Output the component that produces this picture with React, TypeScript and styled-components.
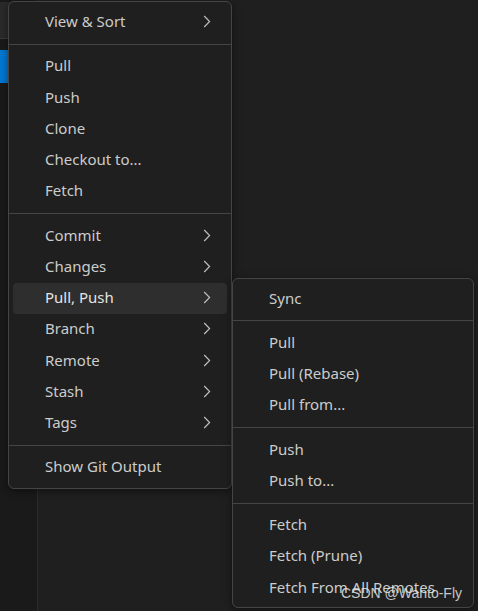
import React from 'react';
import styled, { createGlobalStyle } from 'styled-components';

type Entry = { label: string; sub?: boolean; active?: boolean } | 'sep';

const mainItems: Entry[] = [
  { label: 'View & Sort', sub: true },
  'sep',
  { label: 'Pull' },
  { label: 'Push' },
  { label: 'Clone' },
  { label: 'Checkout to...' },
  { label: 'Fetch' },
  'sep',
  { label: 'Commit', sub: true },
  { label: 'Changes', sub: true },
  { label: 'Pull, Push', sub: true, active: true },
  { label: 'Branch', sub: true },
  { label: 'Remote', sub: true },
  { label: 'Stash', sub: true },
  { label: 'Tags', sub: true },
  'sep',
  { label: 'Show Git Output' },
];

const subItems: Entry[] = [
  { label: 'Sync' },
  'sep',
  { label: 'Pull' },
  { label: 'Pull (Rebase)' },
  { label: 'Pull from...' },
  'sep',
  { label: 'Push' },
  { label: 'Push to...' },
  'sep',
  { label: 'Fetch' },
  { label: 'Fetch (Prune)' },
  { label: 'Fetch From All Remotes' },
];

const Chevron = () => (
  <svg width="8" height="13" viewBox="0 0 8 13" fill="none">
    <path d="M1.2 1 L6.6 6.5 L1.2 12" stroke="currentColor" strokeWidth="1.2" />
  </svg>
);

const MenuList = ({ items }: { items: Entry[] }) => (
  <>
    {items.map((it, i) =>
      it === 'sep' ? (
        <Separator key={i} />
      ) : (
        <Item key={i} $active={it.active}>
          <Label>{it.label}</Label>
          {it.sub && (
            <Arrow>
              <Chevron />
            </Arrow>
          )}
        </Item>
      )
    )}
  </>
);

const App = () => {
  return (
    <>
      <GlobalStyle />
      <Page>
        <Sidebar>
          <InputArea />
          <SelectedRow />
        </Sidebar>
        <Editor />
        <MainMenu>
          <MenuList items={mainItems} />
        </MainMenu>
        <SubMenu>
          <MenuList items={subItems} />
        </SubMenu>
        <Watermark>CSDN @Wanto-Fly</Watermark>
      </Page>
    </>
  );
};

export default App;

const GlobalStyle = createGlobalStyle`
  html, body {
    margin: 0;
    padding: 0;
    background: #1f1f1f;
  }
  body {
    font-family: 'Noto Sans', 'Open Sans', sans-serif;
  }
`;

const Page = styled.div`
  position: relative;
  width: 478px;
  height: 611px;
  overflow: hidden;
  display: flex;
  background: #1f1f1f;
`;

const Sidebar = styled.div`
  width: 37px;
  flex-shrink: 0;
  background: #1a1a1a;
  border-right: 1px solid #2b2b2b;
  display: flex;
  flex-direction: column;
`;

const InputArea = styled.div`
  height: 36px;
  margin-top: 2px;
  background: #2a2a2a;
  border-bottom: 1px solid #3a3a3a;
`;

const SelectedRow = styled.div`
  height: 33px;
  margin-top: 11px;
  background: #0078d4;
`;

const Editor = styled.div`
  flex: 1;
  background: #1f1f1f;
`;

const MenuBase = styled.div`
  position: absolute;
  box-sizing: border-box;
  background: #1f1f1f;
  border: 1px solid #454545;
  border-radius: 6px;
  box-shadow: 0 2px 8px rgba(0, 0, 0, 0.45);
  display: flex;
  flex-direction: column;
`;

const MainMenu = styled(MenuBase)`
  left: 8px;
  top: 1px;
  width: 224px;
  padding: 4.5px 0;
`;

const SubMenu = styled(MenuBase)`
  left: 232px;
  top: 278px;
  width: 242px;
  padding: 4px 0;
`;

const Item = styled.div<{ $active?: boolean }>`
  height: 31.25px;
  margin: 0 4px;
  padding: 0 16px 1px 32px;
  box-sizing: border-box;
  border-radius: 4px;
  display: flex;
  align-items: center;
  justify-content: space-between;
  background: ${(p) => (p.$active ? '#2e2e2e' : 'transparent')};
  color: ${(p) => (p.$active ? '#e4e4e4' : '#cccccc')};
  font-size: 15px;
  white-space: nowrap;
`;

const Label = styled.span`
  line-height: 1;
`;

const Arrow = styled.span`
  display: flex;
  align-items: center;
  color: #bdbdbd;
`;

const Separator = styled.div`
  height: 1px;
  margin: 6px 0;
  background: #454545;
`;

const Watermark = styled.div`
  position: absolute;
  right: 16px;
  bottom: 10px;
  font-family: 'Liberation Sans', Arial, sans-serif;
  font-size: 14px;
  color: rgba(230, 230, 230, 0.85);
`;
